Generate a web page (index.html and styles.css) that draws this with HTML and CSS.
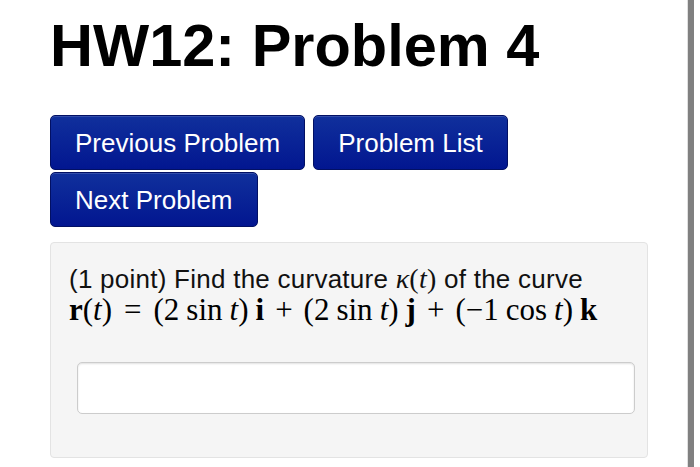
FILE: index.html
```html
<!DOCTYPE html>
<html>
<head>
<meta charset="utf-8">
<link rel="stylesheet" href="styles.css">
</head>
<body>
<div class="page">
  <main class="main">
    <h1 class="title">HW12: Problem 4</h1>
    <nav class="nav">
      <a class="btn">Previous Problem</a>
      <a class="btn">Problem List</a>
      <a class="btn">Next Problem</a>
    </nav>
    <section class="problem">
      <p class="line">(1 point) Find the curvature <span class="mi">κ</span><span class="mo">(</span><span class="mi">t</span><span class="mo">)</span> of the curve</p>
      <p class="math"><b>r</b>(<i>t</i>)<span class="rel">=</span>(2<span class="sp"></span>sin<span class="sp"></span><i>t</i>)<span class="sp"></span><b>i</b><span class="bin">+</span>(2<span class="sp"></span>sin<span class="sp"></span><i>t</i>)<span class="sp"></span><b>j</b><span class="bin">+</span>(−1<span class="sp"></span>cos<span class="sp"></span><i>t</i>)<span class="sp"></span><b>k</b></p>
      <input class="answer" type="text">
    </section>
  </main>
  <div class="scrollbar"></div>
</div>
</body>
</html>
```
FILE: styles.css
```css
html, body {
  margin: 0;
  padding: 0;
  background: #ffffff;
}
.page {
  display: flex;
  height: 467px;
  overflow: hidden;
}
.main {
  flex: 1;
  padding-left: 50px;
  font-family: "Liberation Sans", Arial, sans-serif;
}
.title {
  margin: 12px 0 0 0;
  font-size: 59.5px;
  line-height: 68px;
  font-weight: bold;
  color: #000;
}
.nav {
  width: 598px;
  margin-top: 35px;
  display: flex;
  flex-wrap: wrap;
  column-gap: 8px;
  row-gap: 2px;
}
.btn {
  box-sizing: border-box;
  height: 55px;
  padding: 2px 24px 0 24px;
  display: flex;
  align-items: center;
  font-size: 26px;
  color: #fff;
  background: linear-gradient(#10309c, #021690);
  border: 1px solid #021064;
  border-radius: 5px;
  box-shadow: inset 0 1px 0 rgba(255,255,255,0.15);
}
.problem {
  box-sizing: border-box;
  width: 598px;
  height: 216px;
  margin-top: 15px;
  padding: 20px 12px 0 18px;
  background: #f5f5f5;
  border: 1px solid #e3e3e3;
  border-radius: 4px;
}
.line {
  margin: 0;
  font-size: 26px;
  line-height: 32px;
  letter-spacing: 0.25px;
  color: #111;
}
.mi {
  font-family: "Liberation Serif", "Times New Roman", serif;
  font-style: italic;
  font-size: 28px;
}
.mo {
  font-family: "Liberation Serif", "Times New Roman", serif;
  font-size: 28px;
}
.math {
  margin: 0;
  font-family: "Liberation Serif", "Times New Roman", serif;
  font-size: 31px;
  line-height: 30px;
  color: #000;
}
.math b { font-weight: bold; }
.math i { font-style: italic; }
.sp { display: inline-block; width: 7px; }
.rel { margin: 0 12px; }
.bin { margin: 0 11px; }
.answer {
  display: block;
  box-sizing: border-box;
  width: 558px;
  height: 52px;
  margin: 37px 0 0 8px;
  background: #fff;
  border: 1px solid #cccccc;
  border-radius: 5px;
  box-shadow: inset 0 1px 2px rgba(0,0,0,0.12);
}
.scrollbar {
  width: 6px;
  margin-right: 6px;
  background: #808080;
  border-left: 1px solid #e0e0e0;
}
```
